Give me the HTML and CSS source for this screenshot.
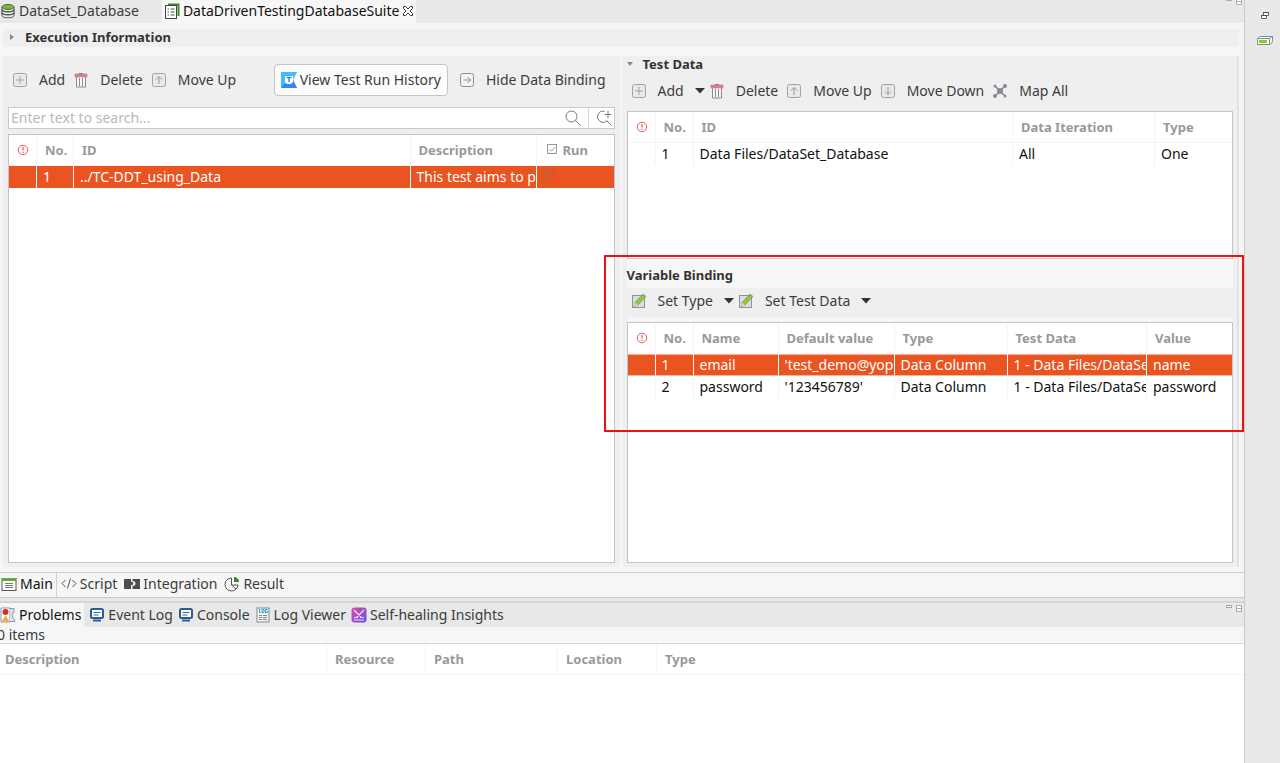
FILE: index.html
```html
<!DOCTYPE html>
<html lang="en">
<head>
  <meta charset="UTF-8">
  <meta name="viewport" content="width=device-width, initial-scale=1.0">
  <title>DataDrivenTestingDatabaseSuite</title>
  <link rel="stylesheet" href="styles.css">
</head>
<body>
  <!-- Shared icons -->
  <svg class="sprite" width="0" height="0" aria-hidden="true">
    <symbol id="i-add" viewBox="0 0 16 16"><rect x="1.5" y="1.5" width="13" height="13" rx="2" fill="#e9e9eb" stroke="#a2a2a6"/><path d="M8 4v8M4 8h8" stroke="#a2a2a6" fill="none"/></symbol>
    <symbol id="i-up" viewBox="0 0 16 16"><rect x="1.5" y="1.5" width="13" height="13" rx="2" fill="#e9e9eb" stroke="#a2a2a6"/><path d="M8 12V5M5 7.5L8 4.500l3 3" stroke="#96969c" fill="none"/></symbol>
    <symbol id="i-down" viewBox="0 0 16 16"><rect x="1.5" y="1.500" width="13" height="13" rx="2" fill="#e9e9eb" stroke="#a2a2a6"/><path d="M8 4v7M5 8.500l3 3 3-3" stroke="#96969c" fill="none"/></symbol>
    <symbol id="i-right" viewBox="0 0 16 16"><rect x="1.500" y="1.500" width="13" height="13" rx="2" fill="#f3f3f3" stroke="#8e8e94"/><path d="M4.500 8h7M8.500 5l3 3-3 3" stroke="#8e8e94" fill="none"/></symbol>
    <symbol id="i-trash" viewBox="0 0 16 16"><path d="M3.500 5v10h9V5" fill="#f6f6f6" stroke="#8b8b93"/><path d="M6.500 6v8M9.500 6v8" stroke="#8b8b93"/><path d="M6 1.500h4" stroke="#777"/><rect x="2" y="2" width="12" height="3" fill="#e77c84" stroke="#a5878c" stroke-width=".6"/></symbol>
    <symbol id="i-map" viewBox="0 0 16 16"><path d="M3 3l10 10M13 3L3 13" stroke="#858b95" stroke-width="1.500"/><g fill="#858b95"><circle cx="8" cy="8" r="3"/><circle cx="3" cy="3" r="1.500"/><circle cx="13" cy="3" r="2"/><circle cx="3" cy="13" r="2"/><circle cx="13" cy="13" r="1.500"/></g></symbol>
    <symbol id="i-edit" viewBox="0 0 16 16"><rect x="1.500" y="2.500" width="12" height="12" fill="#dcdce2" stroke="#92929b"/><path d="M3 13.500l1-4L12 1l3 2.500L7 12z" fill="#93c83e" stroke="#6b9a50" stroke-width=".7"/><path d="M3 13.500l1-4L7 12z" fill="#f0d6a8"/><path d="M11 2l3 2.500" stroke="#8996a8"/></symbol>
    <symbol id="i-alert" viewBox="0 0 12 12"><circle cx="6" cy="6" r="4.700" fill="none" stroke="#e25d56"/><path d="M6 3v3.600M6 7.800V9" stroke="#e25d56" stroke-width="1.200"/></symbol>
    <symbol id="i-check" viewBox="0 0 12 12"><rect x="1.500" y="1.500" width="9" height="9" fill="none" stroke="currentColor"/><path d="M3.500 6l2 2 3.500-4" fill="none" stroke="currentColor"/></symbol>
    <symbol id="i-monitor" viewBox="0 0 16 16"><rect x="2" y="2" width="12" height="9" rx="1.500" fill="#fff" stroke="#2c5b98" stroke-width="2"/><path d="M4.500 5.500h7M4.500 8h5" stroke="#3f66a0"/><path d="M4 13.500h8" stroke="#2c5b98" stroke-width="2"/></symbol>
    <symbol id="i-caret" viewBox="0 0 10 6"><path d="M0 0h10L5 5.500z" fill="#333"/></symbol>
    <symbol id="i-minmax" viewBox="0 0 16 8"><rect x=".5" y=".5" width="5" height="2" fill="#fff" stroke="#aaa"/><path d="M10.500.5h5v6h-5zM10.500 3.500h5" fill="#fff" stroke="#aaa"/></symbol>
  </svg>

  <main class="workbench">
    <!-- Editor tabs -->
    <div class="editor-tabs">
      <button class="editor-tab">
        <svg class="icon" viewBox="0 0 16 16"><path d="M2 4v8.500c0 3 12 3 12 0V4" fill="#eee" stroke="#555"/><path d="M2 6.500c0 3 12 3 12 0M2 9.500c0 3 12 3 12 0" fill="none" stroke="#555" stroke-width="1.500"/><ellipse cx="8" cy="4" rx="6" ry="2.500" fill="#79b843" stroke="#4b693b"/></svg>
        DataSet_Database
      </button>
      <button class="editor-tab active">
        <svg class="icon" viewBox="0 0 16 16"><path d="M4 1.500h10.500V13" fill="none" stroke="#3d8a2e" stroke-width="2"/><rect x="1.500" y="2.500" width="11" height="13" fill="#fff" stroke="#444"/><path d="M3.500 6H5M3.500 9H5M3.500 12H5M6.500 6h4M6.500 9h4M6.500 12h4" stroke="#555"/></svg>
        DataDrivenTestingDatabaseSuite
        <svg class="close" viewBox="0 0 12 12"><path d="M1.500 1.500h2L6 4l2.500-2.500h2v2L8 6l2.500 2.500v2h-2L6 8l-2.500 2.500h-2v-2L4 6 1.500 3.500z" fill="#fff" stroke="#333"/></svg>
      </button>
      <svg class="minmax raised"><use href="#i-minmax"/></svg>
    </div>

    <div class="editor">
      <button class="section-title execution">
        <svg class="twistie" viewBox="0 0 6 6"><path d="M1 0l4 3-4 3z" fill="#888"/></svg>
        Execution Information
      </button>

      <div class="panes">
        <!-- Test cases -->
        <section class="pane">
          <div class="toolbar case-toolbar">
            <button class="tool"><svg class="icon"><use href="#i-add"/></svg>Add</button>
            <button class="tool"><svg class="icon"><use href="#i-trash"/></svg>Delete</button>
            <button class="tool"><svg class="icon"><use href="#i-up"/></svg>Move Up</button>
            <button class="history-btn">
              <svg class="icon" viewBox="0 0 16 16"><path d="M0 0h16l-4 8 4 8H0z" fill="#43bdf8"/><path d="M3 12l9-4 4 8H0z" fill="#3785f5"/><path d="M4 4h8v6l-2 2H6l-2-2z" fill="#fff"/><path d="M5.500 5.500h5M8 5.500V10" stroke="#3785f5" stroke-width="1.500"/></svg>
              View Test Run History
            </button>
            <button class="tool"><svg class="icon"><use href="#i-right"/></svg>Hide Data Binding</button>
          </div>

          <div class="search">
            <input type="text" placeholder="Enter text to search..." aria-label="Search test cases">
            <button class="search-btn" aria-label="Search"><svg class="icon" viewBox="0 0 16 16"><circle cx="6.500" cy="6.500" r="5.500" fill="none" stroke="#777"/><path d="M10.500 10.500L15.500 15.500" stroke="#777"/></svg></button>
            <button class="search-btn advanced" aria-label="Advanced search"><svg class="icon" viewBox="0 0 16 16"><path d="M8.500 1.500A5.500 5.500 0 1 0 11 10.500M10.500 10.500l5 5M12 1v7M8.500 4.500h7" fill="none" stroke="#777"/></svg></button>
          </div>

          <div class="table-box grow">
            <table class="grid">
              <colgroup><col class="w-status"><col class="w-no-small"><col><col class="w-description"><col class="w-run"></colgroup>
              <thead>
                <tr><th><svg class="small-icon"><use href="#i-alert"/></svg></th><th>No.</th><th>ID</th><th>Description</th><th><svg class="small-icon check"><use href="#i-check"/></svg>Run</th></tr>
              </thead>
              <tbody>
                <tr class="selected"><td></td><td>1</td><td>../TC-DDT_using_Data</td><td>This test aims to pe</td><td class="run"><svg class="small-icon check"><use href="#i-check"/></svg></td></tr>
              </tbody>
            </table>
          </div>
        </section>

        <!-- Data binding -->
        <section class="pane binding-pane">
          <button class="section-title">
            <svg class="twistie" viewBox="0 0 6 6"><path d="M0 1h6L3 5z" fill="#888"/></svg>
            Test Data
          </button>
          <div class="toolbar">
            <button class="tool"><svg class="icon"><use href="#i-add"/></svg>Add<svg class="caret"><use href="#i-caret"/></svg></button>
            <button class="tool"><svg class="icon"><use href="#i-trash"/></svg>Delete</button>
            <button class="tool"><svg class="icon"><use href="#i-up"/></svg>Move Up</button>
            <button class="tool"><svg class="icon"><use href="#i-down"/></svg>Move Down</button>
            <button class="tool"><svg class="icon"><use href="#i-map"/></svg>Map All</button>
          </div>
          <div class="table-box test-data">
            <table class="grid">
              <colgroup><col class="w-status"><col class="w-no"><col><col class="w-iteration"><col class="w-run"></colgroup>
              <thead>
                <tr><th><svg class="small-icon"><use href="#i-alert"/></svg></th><th>No.</th><th>ID</th><th>Data Iteration</th><th>Type</th></tr>
              </thead>
              <tbody>
                <tr><td></td><td>1</td><td>Data Files/DataSet_Database</td><td>All</td><td>One</td></tr>
              </tbody>
            </table>
          </div>

          <div class="variable-binding">
            <h2>Variable Binding</h2>
            <div class="toolbar">
              <button class="tool"><svg class="icon"><use href="#i-edit"/></svg>Set Type<svg class="caret"><use href="#i-caret"/></svg></button>
              <button class="tool"><svg class="icon"><use href="#i-edit"/></svg>Set Test Data<svg class="caret"><use href="#i-caret"/></svg></button>
            </div>
            <div class="table-box grow">
              <table class="grid">
                <colgroup><col class="w-status"><col class="w-no"><col class="w-name"><col class="w-default"><col class="w-type"><col><col class="w-value"></colgroup>
                <thead>
                  <tr><th><svg class="small-icon"><use href="#i-alert"/></svg></th><th>No.</th><th>Name</th><th>Default value</th><th>Type</th><th>Test Data</th><th>Value</th></tr>
                </thead>
                <tbody>
                  <tr class="selected focused"><td></td><td>1</td><td>email</td><td>'test_demo@yop</td><td>Data Column</td><td>1 - Data Files/DataSet</td><td>name</td></tr>
                  <tr><td></td><td>2</td><td>password</td><td>'123456789'</td><td>Data Column</td><td>1 - Data Files/DataSet</td><td>password</td></tr>
                </tbody>
              </table>
            </div>
            <div class="highlight"></div>
          </div>
        </section>
      </div>
    </div>

    <!-- Editor pages -->
    <div class="page-tabs">
      <button class="page-tab active"><svg class="icon" viewBox="0 0 16 16"><rect x="1" y="2.500" width="14" height="12" fill="#fff" stroke="#555"/><path d="M1 3.500h14" stroke="#62a744" stroke-width="3"/><path d="M4 7.500h8M4 9.500h8M4 11.500h8" stroke="#777"/></svg>Main</button>
      <button class="page-tab"><svg class="icon" viewBox="0 0 16 16"><path d="M4.500 4L1 7.500 4.500 11M11.500 4L15 7.500 11.500 11M9.500 2.500l-3 10" fill="none" stroke="#555"/></svg>Script</button>
      <button class="page-tab"><svg class="icon" viewBox="0 0 16 16"><path d="M0 3h7v3c3-1 3 4 0 3v4H0z" fill="#4d4d4d"/><path d="M8.500 3H16v10H8.500v-3c4 0 4-5 0-5z" fill="#4d4d4d"/></svg>Integration</button>
      <button class="page-tab"><svg class="icon" viewBox="0 0 16 16"><path d="M7.500 2a6.500 6.500 0 1 0 6.500 7H7.500z" fill="#f8f8f8" stroke="#555"/><path d="M7.500 9l4.500 4" stroke="#555"/><path d="M10 1v5h5A5 5 0 0 0 10 1z" fill="#3f7f36"/></svg>Result</button>
    </div>

    <!-- Problems view -->
    <section class="views">
      <div class="view-tabs">
        <button class="view-tab active"><svg class="icon" viewBox="0 0 16 16"><path d="M1 1h9v14H1z" fill="#fff" stroke="#8298ae"/><circle cx="5.500" cy="5" r="3" fill="#d92c2c"/><path d="M5.500 9l3 5h-6z" fill="#edae28" stroke="#edae28"/><path d="M10 1.500h4v4c-4 2-1 4 1 9h-5" fill="#d8e3ef" stroke="#8298ae"/></svg>Problems</button>
        <button class="view-tab"><svg class="icon"><use href="#i-monitor"/></svg>Event Log</button>
        <button class="view-tab"><svg class="icon"><use href="#i-monitor"/></svg>Console</button>
        <button class="view-tab"><svg class="icon" viewBox="0 0 16 16"><rect x="2" y="1" width="12" height="14" fill="#f4f4f4" stroke="#888"/><path d="M4.500 2v3.500H6M7 2.500h2v3H7zM12.500 2.500h-2v3h2V4" fill="none" stroke="#239fdd"/><path d="M4 8.500h3M8 8.500h4M4 10.500h3M8 10.500h4M4 12.500h3M8 12.500h4" stroke="#888"/></svg>Log Viewer</button>
        <button class="view-tab"><svg class="icon" viewBox="0 0 16 16"><defs><linearGradient id="heal" x2="1" y2="1"><stop stop-color="#e04b9e"/><stop offset="1" stop-color="#5855ee"/></linearGradient></defs><rect x=".5" y=".5" width="15" height="15" rx="3" fill="url(#heal)"/><path d="M3 3l7 7M13 3l-8 8M3 10.500h4M9 10.500h4M3 13h10" stroke="#f3dcff" stroke-width="1.200"/></svg>Self-healing Insights</button>
        <svg class="minmax"><use href="#i-minmax"/></svg>
      </div>
      <p class="item-count">0 items</p>
      <div class="problems">
        <table class="grid">
          <colgroup><col class="w-problem"><col class="w-resource"><col class="w-path"><col class="w-resource"><col></colgroup>
          <thead>
            <tr><th>Description</th><th>Resource</th><th>Path</th><th>Location</th><th>Type</th></tr>
          </thead>
        </table>
      </div>
    </section>
  </main>

  <aside class="trim">
    <button aria-label="Restore"><svg class="trim-icon" viewBox="0 0 16 16"><path d="M6.500 4.500h5v3h-5zM4.500 7.500h5v3h-5z" fill="#fff" stroke="#6a625e"/><path d="M6 4.500h6M4 7.500h6" stroke="#554e4a"/></svg></button>
    <button aria-label="Job progress"><svg class="trim-icon" viewBox="0 0 16 16"><path d="M.5 6l2-2.500h13v5l-2 3H.5z" fill="#fff" stroke="#858c9f"/><path d="M.5 5.500h12v6M12.500 5.500l3-2" fill="none" stroke="#858c9f"/><path d="M2 8.500h8" stroke="#86cf17" stroke-width="3"/></svg></button>
  </aside>
</body>
</html>
```
FILE: styles.css
```css
* {
  box-sizing: border-box;
}

body {
  display: flex;
  height: 100vh;
  margin: 0;
  overflow: hidden;
  background-color: #e8e8e8;
  color: #3c3c3c;
  font-family: "Noto Sans", sans-serif;
  font-size: 14px;
  line-height: 20px;
}

button {
  display: flex;
  align-items: center;
  padding: 0;
  border: none;
  background: none;
  color: inherit;
  font: inherit;
  white-space: nowrap;
}

svg {
  display: block;
  flex: none;
}

.sprite {
  position: absolute;
}

.icon {
  width: 16px;
  height: 16px;
}

.small-icon {
  width: 12px;
  height: 12px;
}

.workbench {
  display: flex;
  flex: 1;
  flex-direction: column;
  min-width: 0;
  border-right: 1px solid #c9c9c9;
}

/* Editor tabs */
.editor-tabs,
.view-tabs {
  display: flex;
  background-color: #e8e8e8;
}

.editor-tabs {
  height: 23px;
}

.editor-tab {
  gap: 3px;
  padding: 0 23px 2px 0;
}

.editor-tab.active {
  padding: 0 2px 2px;
  background-color: #f6f6f6;
  color: #111;
}

.close {
  width: 12px;
  height: 12px;
}

.minmax {
  width: 16px;
  height: 8px;
  margin: 2px 2px 0 auto;
}

.minmax.raised {
  margin-top: -2px;
}

/* Editor body */
.editor {
  display: flex;
  flex: 1;
  flex-direction: column;
  gap: 9px;
  min-height: 0;
  padding: 6px 5px 5px 3px;
  background-color: #f6f6f6;
}

.section-title,
h2 {
  color: #333;
  font-size: 13px;
  font-weight: bold;
}

.section-title {
  gap: 10px;
  height: 18px;
  padding: 0 0 2px 6px;
  background-color: #efefef;
}

.twistie {
  width: 6px;
  height: 6px;
}

.panes {
  display: grid;
  flex: 1;
  grid-template-columns: 1fr 1fr;
  gap: 3px;
  min-height: 0;
}

.pane {
  display: flex;
  flex-direction: column;
  min-width: 0;
  padding: 0 5px 4px;
  background-color: #efefef;
}

.binding-pane {
  padding: 0 4px 4px;
  border-right: 2px solid #e2e2e2;
}

.binding-pane > .section-title {
  padding-left: 0;
}

.toolbar {
  display: flex;
  align-items: center;
  gap: 8px;
  height: 29px;
  padding: 0 0 3px 4px;
}

.case-toolbar {
  height: 51px;
}

.tool {
  gap: 11px;
}

.caret {
  width: 10px;
  height: 6px;
  margin-right: -4px;
}

.history-btn {
  gap: 3px;
  height: 32px;
  margin: 0 3px 0 auto;
  padding: 0 6px;
  border: 1px solid #c4c4c4;
  border-radius: 4px;
  background-color: #fcfcfc;
}

.case-toolbar .tool:last-child {
  margin-right: 9px;
}

.search {
  display: flex;
  height: 22px;
  margin-bottom: 5px;
  border: 1px solid #c9c9c9;
  background-color: #fff;
}

.search input {
  flex: 1;
  min-width: 0;
  padding: 0 2px;
  border: none;
  background: none;
  font: inherit;
}

.search input::placeholder {
  color: #b9b9b9;
}

.search-btn {
  padding: 0 7px;
}

.search-btn.advanced {
  padding: 0 2px 0 7px;
  border-left: 1px solid #d8d8d8;
}

/* Tables */
.table-box {
  overflow: hidden;
  border: 1px solid #c4c4c4;
  background-color: #fff;
}

.grow {
  flex: 1;
  min-height: 0;
}

.grid {
  width: 100%;
  border-spacing: 0;
  table-layout: fixed;
}

.grid th,
.grid td {
  overflow: hidden;
  border-right: 1px solid #f4f4f4;
  text-align: left;
  white-space: nowrap;
}

.grid th:last-child,
.grid td:last-child {
  border-right: none;
}

.grid th {
  height: 31px;
  padding: 0 0 0 8px;
  border-bottom: 1px solid #f4f4f4;
  color: #999;
  font-size: 13px;
}

.grid td {
  height: 22px;
  padding: 0 0 0 6px;
  color: #111;
}

.grid .selected td {
  border-right-color: #fff;
  background-color: #e95420;
  color: #fff;
}

.grid .focused td {
  border-top: 1px solid #f6b49d;
  border-bottom: 1px solid #f6b49d;
}

.small-icon.check {
  display: inline-block;
  margin: 0 5px 0 1px;
  color: #999;
}

.grid .run {
  vertical-align: top;
}

.run .small-icon.check {
  display: block;
  margin: 2px 0 0;
  color: #b5613e;
}

.w-status { width: 28px; }
.w-no-small { width: 37px; }
.w-no { width: 38px; }
.w-description { width: 126px; }
.w-run { width: 77px; }
.w-iteration { width: 142px; }
.w-name { width: 85px; }
.w-default { width: 116px; }
.w-type { width: 113px; }
.w-value { width: 85px; }
.w-problem { width: 327px; }
.w-resource { width: 99px; }
.w-path { width: 132px; }

/* Variable binding */
.test-data {
  height: 148px;
}

.binding-pane > .toolbar {
  height: 37px;
}

.variable-binding {
  position: relative;
  display: flex;
  flex: 1;
  flex-direction: column;
  min-height: 0;
  background-color: #f6f6f6;
}

h2 {
  margin: 6px 0 3px;
}

.variable-binding .toolbar {
  margin-bottom: 5px;
  background-color: #efefef;
}

.highlight {
  position: absolute;
  top: -4px;
  right: -11px;
  left: -23px;
  height: 177px;
  border: 2px solid #f01010;
  pointer-events: none;
}

/* Editor pages */
.page-tabs {
  display: flex;
  gap: 7px;
  height: 26px;
  border-top: 1px solid #d0d0d0;
  border-bottom: 1px solid #c9c9c9;
  background-color: #f6f6f6;
}

.page-tab {
  gap: 3px;
  padding-bottom: 3px;
}

.page-tab.active {
  margin-right: -3px;
  padding: 0 3px 3px 1px;
  border-right: 1px solid #d0d0d0;
  color: #111;
}

/* Views */
.views {
  margin-top: 3px;
  border-top: 2px solid #d4d4d4;
}

.view-tabs {
  gap: 5px;
  height: 24px;
}

.view-tab {
  gap: 3px;
}

.view-tab.active {
  padding-right: 3px;
  background-color: #f6f6f6;
  color: #111;
}

.item-count {
  height: 17px;
  margin: 0;
  border-bottom: 1px solid #d8d8d8;
  background-color: #f6f6f6;
  line-height: 16px;
  text-indent: -3px;
}

.problems {
  height: 119px;
  background-color: #fff;
}

.problems th:first-child {
  padding-left: 5px;
}

/* Right trim */
.trim {
  display: flex;
  flex-direction: column;
  gap: 9px;
  width: 35px;
  padding: 8px 0 0 12px;
}

.trim-icon {
  width: 16px;
  height: 16px;
}
```
